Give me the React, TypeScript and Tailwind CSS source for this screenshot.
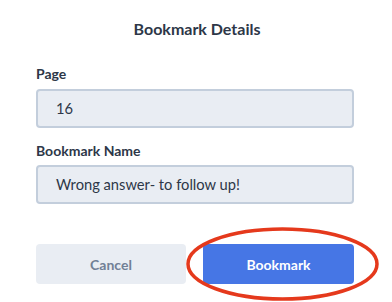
import React from 'react';

export default function App() {
    return (
        <div className="relative w-[392px] h-[302px] bg-white overflow-hidden" style={{ fontFamily: 'Lato, "Noto Sans", sans-serif' }}>
            <div className="flex flex-col px-[36px] pt-[19px]">
                {/* Title */}
                <h1 className="text-center text-[16px] font-bold text-[#2d3748] leading-5 pl-[2px]">Bookmark Details</h1>

                {/* Page */}
                <label className="mt-[27px] text-[14px] font-bold text-[#2d3748] leading-4">Page</label>
                <div className="mt-[7px] h-[39px] w-[318px] rounded-[4px] border-2 border-[#c3cedc] bg-[#e9edf3] flex items-center pl-[18px] text-[14.7px] text-[#2d3748]">
                    16
                </div>

                {/* Bookmark name */}
                <label className="mt-[15px] text-[14px] font-bold text-[#2d3748] leading-4">Bookmark Name</label>
                <div className="mt-[6px] h-[39px] w-[318px] rounded-[4px] border-2 border-[#c3cedc] bg-[#e9edf3] flex items-center pl-[18px] text-[14.7px] text-[#2d3748]">
                    Wrong answer- to follow up!
                </div>

                {/* Buttons */}
                <div className="mt-[40px] flex gap-[17px]">
                    <button className="h-[40px] w-[150px] rounded-[4px] bg-[#e9edf3] text-[14px] font-bold text-[#718096]">Cancel</button>
                    <button className="h-[40px] w-[151px] rounded-[4px] bg-[#4676e5] text-[14px] font-bold text-white">Bookmark</button>
                </div>
            </div>

            {/* Annotation ellipse */}
            <svg className="absolute left-0 top-0 pointer-events-none" width="392" height="302">
                <ellipse cx="282.5" cy="264" rx="94.5" ry="35" fill="none" stroke="#e5391c" strokeWidth="3.5" />
            </svg>
        </div>
    );
}
